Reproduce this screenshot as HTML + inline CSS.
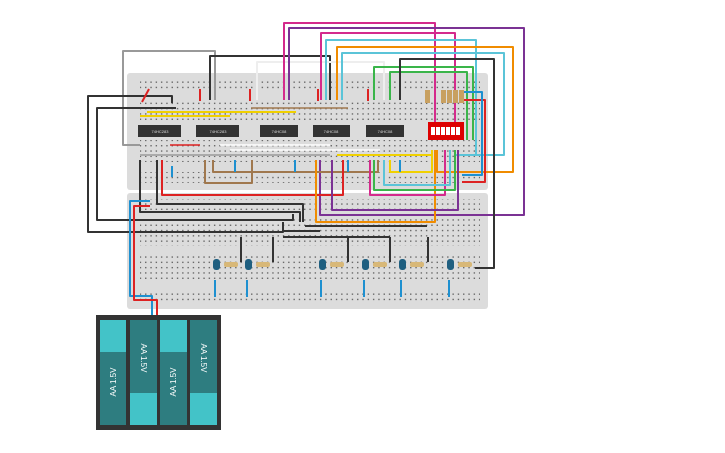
<!DOCTYPE html>
<html><head><style>body{margin:0;background:#fff}svg{display:block}</style></head><body>
<svg width="725" height="453" viewBox="0 0 725 453" xmlns="http://www.w3.org/2000/svg" font-family="Liberation Sans, sans-serif">
<defs>
<pattern id="d" width="5.3" height="5.3" patternUnits="userSpaceOnUse"><rect x="2" y="2" width="1.3" height="1.3" fill="#555"/></pattern>
</defs>
<rect x="127" y="73" width="361" height="117" rx="3" fill="#dcdcdc"/>
<rect x="127" y="193" width="361" height="116" rx="3" fill="#dcdcdc"/>
<rect x="140" y="79" width="340" height="11" fill="url(#d)"/>
<rect x="140" y="99" width="340" height="22" fill="url(#d)"/>
<rect x="140" y="140" width="340" height="22" fill="url(#d)"/>
<rect x="140" y="172" width="340" height="11" fill="url(#d)"/>
<rect x="140" y="199" width="340" height="11" fill="url(#d)"/>
<rect x="140" y="219" width="340" height="27" fill="url(#d)"/>
<rect x="140" y="255" width="340" height="27" fill="url(#d)"/>
<rect x="140" y="291" width="340" height="11" fill="url(#d)"/>
<g fill="none" stroke-width="2" stroke-linejoin="round">
<path d="M215,100V51H123V145H140" stroke="#999"/>
<path d="M172,103V96H88V232H283V222" stroke="#333"/>
<path d="M176,108H97V220H293V214" stroke="#333"/>
<path d="M210,100V56H330V100" stroke="#333"/>
<path d="M257,100V62H384V100" stroke="#eee"/>
<path d="M284,100V23H435V125" stroke="#d42a8c"/>
<path d="M289,100V28H524V215H320V160" stroke="#7b3294"/>
<path d="M321,100V33H455V125" stroke="#d42a8c"/>
<path d="M326,100V40H476V155H455" stroke="#5bc4d8"/>
<path d="M337,100V47H513V172H437V150" stroke="#f08c00"/>
<path d="M342,100V53H504V155H458" stroke="#5bc4d8"/>
<path d="M374,100V67H473V140" stroke="#3ab54a"/>
<path d="M390,100V72H467V140" stroke="#3ab54a"/>
<path d="M400,100V59H494V268H475" stroke="#333"/>
<path d="M205,160V183H252V160" stroke="#a0784e"/>
<path d="M213,160V172H378V160" stroke="#a0784e"/>
<path d="M162,160V195H343V160" stroke="#d22"/>
<path d="M316,160V222H435V150" stroke="#f08c00"/>
<path d="M332,160V210H458V150" stroke="#7b3294"/>
<path d="M370,160V195H445V150" stroke="#d42a8c"/>
<path d="M374,160V190H455V150" stroke="#3ab54a"/>
<path d="M384,160V185H450V150" stroke="#5bc4d8"/>
<path d="M390,160V172H432V150" stroke="#f0d000"/>
<path d="M462,100H485V182H462" stroke="#d22"/>
<path d="M462,92H482V175H462" stroke="#1e90d0"/>
<path d="M140,160V212H300V222" stroke="#333"/>
<path d="M157,160V204H303V222" stroke="#333"/>
<path d="M152,318V296H130V201H150" stroke="#1e90d0"/>
<path d="M157,318V300H134V206H150" stroke="#d22"/>
<path d="M149,89L142,102" stroke="#d22"/>
<path d="M200,89V101M318,89V101M368,89V101M250,89V101" stroke="#d22"/>
<path d="M172,166V177" stroke="#1e90d0"/>
<path d="M235,160V172M295,160V172M348,160V172M400,160V172" stroke="#1e90d0"/>
<path d="M140,116H230M147,112H296" stroke="#f0d000"/>
<path d="M251,108H348" stroke="#a0784e" stroke-width="1.5"/>
<path d="M337,155H433" stroke="#f0d000"/>
<path d="M140,155H330" stroke="#aaa"/>
<path d="M220,145H330M230,150H380" stroke="#fff" stroke-width="1.5"/>
<path d="M170,145H200" stroke="#d22" stroke-width="1.5"/>
<path d="M305,226H427M283,237H390M283,231H320" stroke="#333"/>
<path d="M241,237V262M273,237V262M348,237V262M390,237V262M428,237V262" stroke="#333"/>
<path d="M215,280V297M247,280V297M321,280V297M364,280V297M401,280V297M449,280V297" stroke="#1e90d0"/>
</g>
<g fill="#333">
<rect x="138" y="125" width="43" height="12"/><rect x="196" y="125" width="43" height="12"/>
<rect x="260" y="125" width="38" height="12"/><rect x="313" y="125" width="37" height="12"/>
<rect x="366" y="125" width="38" height="12"/>
</g>
<g fill="#ddd" font-size="4" text-anchor="middle"><text x="160" y="133">74HC283</text><text x="218" y="133">74HC283</text><text x="279" y="133">74HC08</text><text x="331" y="133">74HC08</text><text x="385" y="133">74HC08</text></g>
<rect x="428" y="122" width="36" height="18" fill="#d00"/>
<g fill="#fff"><rect x="431" y="127" width="4" height="8"/><rect x="436" y="127" width="4" height="8"/><rect x="441" y="127" width="4" height="8"/><rect x="446" y="127" width="4" height="8"/><rect x="451" y="127" width="4" height="8"/><rect x="456" y="127" width="4" height="8"/></g>
<g fill="#c8a060"><rect x="425" y="90" width="5" height="13"/><rect x="441" y="90" width="5" height="13"/><rect x="447" y="90" width="5" height="13"/><rect x="453" y="90" width="5" height="13"/><rect x="459" y="90" width="5" height="13"/></g>
<g fill="#1f5f80"><rect x="213" y="259" width="7" height="11" rx="3"/><rect x="245" y="259" width="7" height="11" rx="3"/><rect x="319" y="259" width="7" height="11" rx="3"/><rect x="362" y="259" width="7" height="11" rx="3"/><rect x="399" y="259" width="7" height="11" rx="3"/><rect x="447" y="259" width="7" height="11" rx="3"/></g>
<g fill="#d8b878"><rect x="224" y="262" width="14" height="5" rx="2"/><rect x="256" y="262" width="14" height="5" rx="2"/><rect x="330" y="262" width="14" height="5" rx="2"/><rect x="373" y="262" width="14" height="5" rx="2"/><rect x="410" y="262" width="14" height="5" rx="2"/><rect x="458" y="262" width="14" height="5" rx="2"/></g>
<rect x="96" y="315" width="125" height="115" fill="#333"/>
<rect x="100" y="320" width="26" height="105" fill="#2e7d80"/><rect x="100" y="320" width="26" height="32" fill="#43c3c8"/>
<rect x="130" y="320" width="27" height="105" fill="#2e7d80"/><rect x="130" y="393" width="27" height="32" fill="#43c3c8"/>
<rect x="160" y="320" width="27" height="105" fill="#2e7d80"/><rect x="160" y="320" width="27" height="32" fill="#43c3c8"/>
<rect x="190" y="320" width="27" height="105" fill="#2e7d80"/><rect x="190" y="393" width="27" height="32" fill="#43c3c8"/>
<g fill="#fff" font-size="8" text-anchor="middle">
<text transform="translate(116,382) rotate(-90)">AA 1.5V</text>
<text transform="translate(141,358) rotate(90)">AA 1.5V</text>
<text transform="translate(176,382) rotate(-90)">AA 1.5V</text>
<text transform="translate(201,358) rotate(90)">AA 1.5V</text>
</g>
</svg>
</body></html>
